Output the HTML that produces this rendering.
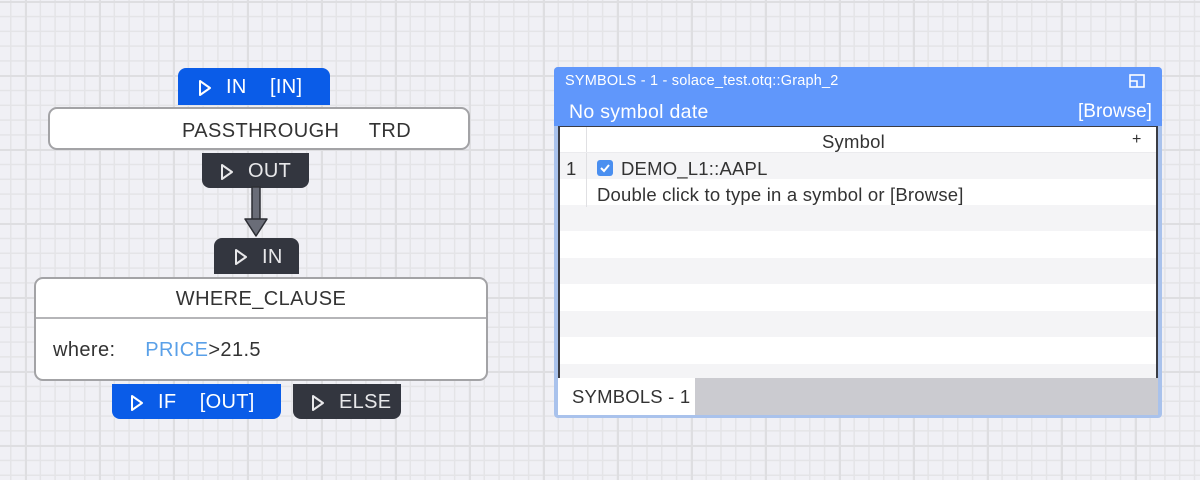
<!DOCTYPE html>
<html><head><meta charset="utf-8"><style>
*{box-sizing:border-box;margin:0;padding:0}
body{width:1200px;height:480px;overflow:hidden;position:relative;font-family:"Liberation Sans",sans-serif;color:#333;
background-color:#f0f0f5;
background-image:
linear-gradient(to right,#dedee1 2px,transparent 2px),
linear-gradient(to bottom,#dedee1 2px,transparent 2px),
linear-gradient(to right,#e4e4e7 1.5px,transparent 1.5px),
linear-gradient(to bottom,#e4e4e7 1.5px,transparent 1.5px);
background-size:74px 74px,74px 74px,14.8px 14.8px,14.8px 14.8px;
background-position:25px 1px,25px 1px,10px 1px,10px 1px;}
.a{position:absolute}
.tab{position:absolute;color:#fff;font-size:20px;letter-spacing:0.3px;display:flex;align-items:center;white-space:pre;padding-top:2px}
.blue{background:#0a5ce8}
.dark{background:#33363f;color:#e8e8ea}
.tri{display:inline-block;width:14px;height:18px;margin-right:14px}
.box{position:absolute;background:#fff;border:2px solid #a3a3a6;border-radius:9px}
.t{font-size:20px;letter-spacing:0.4px;white-space:pre}
.p{font-size:18.5px;letter-spacing:0.2px;white-space:pre}
</style></head><body>

<div class="tab blue" style="left:178px;top:68px;width:152px;height:37px;border-radius:8px 8px 0 0;padding-left:20px"><svg class="tri" viewBox="0 0 14 18"><path d="M2 2 L12 9 L2 16 Z" fill="none" stroke="#fff" stroke-width="2" stroke-linejoin="round"/></svg>IN    [IN]</div>
<div class="box" style="left:48px;top:107px;width:422px;height:43px"><div class="a t" style="left:132px;top:11px">PASSTHROUGH     TRD</div></div>

<div class="tab dark" style="left:202px;top:153px;width:107px;height:35px;border-radius:0 0 8px 8px;padding-left:18px"><svg class="tri" viewBox="0 0 14 18"><path d="M2 2 L12 9 L2 16 Z" fill="none" stroke="#e8e8ea" stroke-width="2" stroke-linejoin="round"/></svg>OUT</div>

<svg class="a" style="left:240px;top:186px" width="32" height="54"><rect x="12" y="1" width="8" height="34" fill="#6a6d78" stroke="#2c2e34" stroke-width="1.5"/><path d="M5 33 L27 33 L16 50 Z" fill="#6a6d78" stroke="#2c2e34" stroke-width="1.5" stroke-linejoin="round"/></svg>

<div class="tab dark" style="left:214px;top:238px;width:85px;height:36px;border-radius:8px 8px 0 0;padding-left:20px"><svg class="tri" viewBox="0 0 14 18"><path d="M2 2 L12 9 L2 16 Z" fill="none" stroke="#e8e8ea" stroke-width="2" stroke-linejoin="round"/></svg>IN</div>

<div class="box" style="left:34px;top:277px;width:454px;height:104px">
<div class="a t" style="left:0;top:9px;width:100%;text-align:center">WHERE_CLAUSE</div>
<div class="a" style="left:0;top:38px;width:100%;height:2px;background:#b5b5b8"></div>
<div class="a t" style="left:17px;top:60px">where:     <span style="color:#5aa0e8">PRICE</span>&gt;21.5</div>
</div>

<div class="tab blue" style="left:112px;top:384px;width:169px;height:35px;border-radius:0 0 8px 8px;padding-left:18px"><svg class="tri" viewBox="0 0 14 18"><path d="M2 2 L12 9 L2 16 Z" fill="none" stroke="#fff" stroke-width="2" stroke-linejoin="round"/></svg>IF    [OUT]</div>
<div class="tab dark" style="left:293px;top:384px;width:108px;height:35px;border-radius:0 0 8px 8px;padding-left:18px"><svg class="tri" viewBox="0 0 14 18"><path d="M2 2 L12 9 L2 16 Z" fill="none" stroke="#e8e8ea" stroke-width="2" stroke-linejoin="round"/></svg>ELSE</div>

<!-- panel -->
<div class="a" style="left:554px;top:67px;width:608px;height:351px;background:#a9c2ec;border-radius:4px"></div>
<div class="a" style="left:554px;top:67px;width:608px;height:59px;background:#6097fb;border-radius:4px 4px 0 0"></div>
<div class="a" style="left:565px;top:73px;font-size:14.5px;letter-spacing:0.2px;color:#fff">SYMBOLS - 1 - solace_test.otq::Graph_2</div>
<svg class="a" style="left:1129px;top:74px" width="16" height="14"><rect x="1" y="1" width="14" height="12" fill="none" stroke="#fff" stroke-width="1.6"/><path d="M1 7 H8 V13" fill="none" stroke="#fff" stroke-width="1.6"/></svg>
<div class="a" style="left:569px;top:101px;font-size:19.5px;letter-spacing:0.3px;color:#fff">No symbol date</div>
<div class="a" style="left:1078px;top:101px;font-size:19px;color:#fff">[Browse]</div>

<div class="a" style="left:558px;top:126px;width:600px;height:252px;background:#fff;border-left:2px solid #3a3c44;border-right:2px solid #3a3c44;border-top:1px solid #3a3c44;overflow:hidden">
<div class="a" style="left:0;top:26px;width:100%;height:26px;background:#f4f4f6"></div>
<div class="a" style="left:0;top:78px;width:100%;height:26px;background:#f4f4f6"></div>
<div class="a" style="left:0;top:131px;width:100%;height:26px;background:#f4f4f6"></div>
<div class="a" style="left:0;top:184px;width:100%;height:26px;background:#f4f4f6"></div>
<div class="a" style="left:0;top:237px;width:100%;height:26px;background:#f4f4f6"></div>
<div class="a" style="left:26px;top:0;width:1px;height:80px;background:#e0e0e3"></div>
<div class="a" style="left:0;top:25px;width:100%;height:1px;background:#ebebee"></div>
<div class="a p" style="left:262px;top:4px">Symbol</div>
<div class="a" style="left:572px;top:4px;font-size:16px">+</div>
<div class="a p" style="left:6px;top:31px">1</div>
<div class="a" style="left:37px;top:33px;width:16px;height:16px;background:#4a8ff0;border-radius:3px"><svg width="16" height="16"><path d="M4 8 L7 11 L12 5" fill="none" stroke="#fff" stroke-width="2"/></svg></div>
<div class="a p" style="left:61px;top:31px">DEMO_L1::AAPL</div>
<div class="a p" style="left:37px;top:57px">Double click to type in a symbol or [Browse]</div>
</div>
<div class="a" style="left:558px;top:378px;width:600px;height:37px;background:#cbcbd0"></div>
<div class="a" style="left:558px;top:378px;width:137px;height:37px;background:#fff"></div>
<div class="a p" style="left:572px;top:386px">SYMBOLS - 1</div>
</body></html>
